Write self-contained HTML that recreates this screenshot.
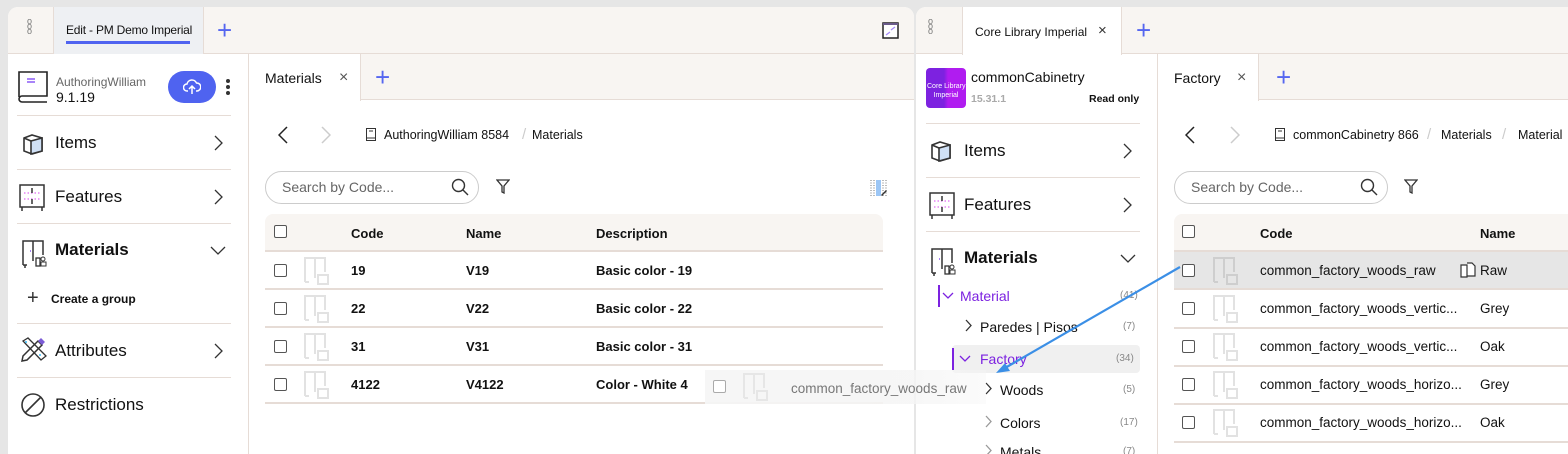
<!DOCTYPE html>
<html><head><meta charset="utf-8"><style>
*{box-sizing:border-box;margin:0;padding:0}
body{width:1568px;height:454px;overflow:hidden;background:#e6e6e6;font-family:"Liberation Sans",Arial,sans-serif;color:#111;position:relative}
.a{position:absolute}
.t{position:absolute;white-space:nowrap}
.cb{position:absolute;width:13px;height:13px;border:1px solid #555;border-radius:2px;background:#fff}
.hr{position:absolute;height:1px;background:#e6dcd6}
.th{position:absolute;width:27px;height:30px;opacity:.18}
</style></head><body>
<!-- LEFT PANEL -->
<div class="a" style="left:8px;top:7px;width:906px;height:447px;background:#fff;border-radius:10px 10px 0 0;overflow:hidden">
 <div class="a" style="left:0;top:0;width:906px;height:47px;background:#f8f5f2;border-bottom:1px solid #e6dcd6"></div>
 <div class="a" style="left:45px;top:0;width:151px;height:47px;background:#eef0f3;border-left:1px solid #e6dcd6;border-right:1px solid #e6dcd6"></div>
 <div class="t" style="left:58px;top:16px;font-size:12px;letter-spacing:-.2px">Edit - PM Demo Imperial</div>
 <div class="a" style="left:58px;top:34px;width:124px;height:3px;background:#4f63f0"></div>
 <div class="t" style="left:19px;top:12px;font-size:9px;line-height:5px;color:#777">o<br>o<br>o</div>
 <div class="t" style="left:209px;top:8px;font-size:26px;color:#5566f0;font-weight:300">+</div>
 <svg class="a" style="left:874px;top:15px" width="17" height="17"><rect x="1" y="1" width="15" height="15" fill="#fff" stroke="#222" stroke-width="1.5"/><rect x="1" y="1" width="15" height="2" fill="#6a5a8a"/><path d="M9 8l4-3M4 13l4-3" stroke="#a78bfa" stroke-width="1.3"/></svg>
 <!-- sidebar -->
 <div class="a" style="left:240px;top:47px;width:1px;height:400px;background:#e6dcd6"></div>
 <svg class="a" style="left:9px;top:63px" width="32" height="34"><path d="M2 27V2h28v24H5a3 3 0 0 0 0 6h25" fill="none" stroke="#222" stroke-width="1.6"/><path d="M10 9h8M10 12h8" stroke="#8b5cf6" stroke-width="1.5"/></svg>
 <div class="t" style="left:48px;top:68px;font-size:12px;color:#666">AuthoringWilliam</div>
 <div class="t" style="left:48px;top:82px;font-size:14px">9.1.19</div>
 <div class="a" style="left:160px;top:64px;width:48px;height:32px;border-radius:16px;background:#4f63f0"></div>
 <svg class="a" style="left:175px;top:71px" width="18" height="18"><path d="M5 13H4a3.5 3.5 0 0 1 0-7 5 5 0 0 1 9.5-1A3.5 3.5 0 0 1 14 13h-1M9 16V9M6 11l3-3 3 3" fill="none" stroke="#fff" stroke-width="1.5"/></svg>
 <div class="a" style="left:218px;top:72px;width:4px;height:4px;border-radius:2px;background:#333"></div>
 <div class="a" style="left:218px;top:78px;width:4px;height:4px;border-radius:2px;background:#333"></div>
 <div class="a" style="left:218px;top:84px;width:4px;height:4px;border-radius:2px;background:#333"></div>
 <div class="hr" style="left:9px;top:108px;width:214px"></div>
 <svg class="a" style="left:13px;top:125px" width="24" height="24"><path d="M3 6l8-3 10 3v13l-10 3-8-3z" fill="#fff" stroke="#333" stroke-width="1.6"/><path d="M10 9l11-3v13l-11 3z" fill="#cfe0f5" stroke="#333" stroke-width="1.6"/><path d="M3 6l7 3" stroke="#333" stroke-width="1.6"/></svg>
 <div class="t" style="left:47px;top:126px;font-size:17px">Items</div>
 <svg class="a" style="left:206px;top:128px" width="9" height="16"><path d="M1 1l7 7-7 7" fill="none" stroke="#333" stroke-width="1.3"/></svg>
 <div class="hr" style="left:9px;top:162px;width:214px"></div>
 <svg class="a" style="left:11px;top:177px" width="26" height="28"><rect x="1" y="1" width="24" height="22" fill="#fff" stroke="#333" stroke-width="1.5"/><path d="M5 9h16M5 15h16" stroke="#d946ef" stroke-dasharray="1.5 2"/><path d="M13 4v5M13 20v-5" stroke="#333" stroke-width="1.5"/><path d="M3 23v4M23 23v4" stroke="#333" stroke-width="1.5"/></svg>
 <div class="t" style="left:47px;top:180px;font-size:17px">Features</div>
 <svg class="a" style="left:206px;top:182px" width="9" height="16"><path d="M1 1l7 7-7 7" fill="none" stroke="#333" stroke-width="1.3"/></svg>
 <div class="hr" style="left:9px;top:216px;width:214px"></div>
 <svg class="a" style="left:13px;top:232px" width="26" height="30"><path d="M2 26V2h20v14M12 2v20M2 26h4M4 26v3" fill="none" stroke="#333" stroke-width="1.5"/><rect x="15" y="19" width="4" height="8" fill="none" stroke="#333" stroke-width="1.3"/><circle cx="22" cy="20" r="2" fill="none" stroke="#333"/><rect x="20" y="23" width="5" height="4" fill="none" stroke="#333"/><path d="M9 12h1" stroke="#8b5cf6" stroke-width="1.5"/></svg>
 <div class="t" style="left:47px;top:233px;font-size:17px;font-weight:bold">Materials</div>
 <svg class="a" style="left:202px;top:239px" width="16" height="9"><path d="M1 1l7 7 7-7" fill="none" stroke="#333" stroke-width="1.3"/></svg>
 <div class="t" style="left:19px;top:280px;font-size:20px;color:#333;font-weight:300">+</div>
 <div class="t" style="left:43px;top:285px;font-size:12px;font-weight:bold">Create a group</div>
 <div class="hr" style="left:9px;top:316px;width:214px"></div>
 <svg class="a" style="left:11px;top:330px" width="28" height="26"><path d="M3 24l5-1 15-15-4-4L4 19z" fill="#fff" stroke="#333" stroke-width="1.5"/><path d="M19 4l3-3 4 4-3 3" fill="#7c5cd6"/><path d="M4 4l5-3 18 18-5 4z" fill="none" stroke="#333" stroke-width="1.3"/><path d="M6 5h2M20 18h2" stroke="#38bdf8" stroke-width="1.5"/></svg>
 <div class="t" style="left:47px;top:334px;font-size:17px">Attributes</div>
 <svg class="a" style="left:206px;top:336px" width="9" height="16"><path d="M1 1l7 7-7 7" fill="none" stroke="#333" stroke-width="1.3"/></svg>
 <div class="hr" style="left:9px;top:370px;width:214px"></div>
 <svg class="a" style="left:12px;top:385px" width="26" height="26"><circle cx="13" cy="13" r="11" fill="none" stroke="#333" stroke-width="1.6"/><path d="M5 21L21 5" stroke="#333" stroke-width="1.6"/></svg>
 <div class="t" style="left:47px;top:388px;font-size:17px">Restrictions</div>
 <!-- content -->
 <div class="a" style="left:241px;top:47px;width:665px;height:46px;background:#f8f5f2;border-bottom:1px solid #e6dcd6"></div>
 <div class="a" style="left:241px;top:47px;width:112px;height:47px;background:#fff;border-right:1px solid #e6dcd6"></div>
 <div class="t" style="left:257px;top:63px;font-size:14px">Materials</div>
 <div class="t" style="left:331px;top:62px;font-size:16px;color:#555">×</div>
 <div class="t" style="left:367px;top:55px;font-size:26px;color:#5566f0;font-weight:300">+</div>
 <svg class="a" style="left:270px;top:119px" width="10" height="18"><path d="M9 1L1 9l8 8" fill="none" stroke="#222" stroke-width="1.5"/></svg>
 <svg class="a" style="left:313px;top:119px" width="10" height="18"><path d="M1 1l8 8-8 8" fill="none" stroke="#ccc" stroke-width="1.5"/></svg>
 <svg class="a" style="left:358px;top:121px" width="10" height="13"><rect x=".5" y=".5" width="9" height="12" fill="none" stroke="#333"/><path d="M3 3h4M.5 10h9" stroke="#333"/></svg>
 <div class="t" style="left:376px;top:121px;font-size:12.5px">AuthoringWilliam 8584</div>
 <div class="t" style="left:514px;top:119px;font-size:15px;color:#ccc">/</div>
 <div class="t" style="left:524px;top:121px;font-size:12.5px">Materials</div>
 <div class="a" style="left:257px;top:164px;width:214px;height:33px;border:1px solid #ccc;border-radius:17px"></div>
 <div class="t" style="left:274px;top:172px;font-size:14px;color:#666">Search by Code...</div>
 <svg class="a" style="left:443px;top:171px" width="18" height="18"><circle cx="7.5" cy="7.5" r="6" fill="none" stroke="#333" stroke-width="1.4"/><path d="M12 12l5 5" stroke="#333" stroke-width="1.4"/></svg>
 <svg class="a" style="left:488px;top:172px" width="14" height="15"><path d="M1 1h12L8 7v7l-2-1V7z" fill="none" stroke="#333" stroke-width="1.3"/></svg>
 <svg class="a" style="left:862px;top:172px" width="18" height="18"><path d="M1 1v16M4 1v16M13 1v16M16 1v16" stroke="#777" stroke-dasharray="1 1.5"/><rect x="6" y="1" width="5" height="16" fill="#9cc6f5"/><path d="M11 16l5-5 1 1-5 5z" fill="#333"/></svg>
 <div class="a" style="left:257px;top:207px;width:618px;height:38px;background:#f8f5f2;border-radius:8px 8px 0 0;border-bottom:2px solid #e6dcd6"></div>
 <div class="cb" style="left:266px;top:218px"></div>
 <div class="t" style="left:343px;top:219px;font-size:13px;font-weight:bold">Code</div>
 <div class="t" style="left:458px;top:219px;font-size:13px;font-weight:bold">Name</div>
 <div class="t" style="left:588px;top:219px;font-size:13px;font-weight:bold">Description</div>
</div>
<!-- left rows -->
<div class="a" style="left:265px;top:252px;width:618px;height:152px">
 <div class="hr" style="left:0;top:36px;width:618px;height:2px"></div>
 <div class="hr" style="left:0;top:74px;width:618px;height:2px"></div>
 <div class="hr" style="left:0;top:112px;width:618px;height:2px"></div>
 <div class="hr" style="left:0;top:150px;width:618px;height:2px"></div>
</div>
<div class="cb" style="left:274px;top:264px"></div><div class="cb" style="left:274px;top:302px"></div><div class="cb" style="left:274px;top:340px"></div><div class="cb" style="left:274px;top:378px"></div>
<svg class="th" style="left:303px;top:256px" viewBox="0 0 27 30"><path d="M2 26V2h20v14M12 2v20M2 26h4" fill="none" stroke="#666" stroke-width="2"/><rect x="15" y="19" width="10" height="9" fill="none" stroke="#666" stroke-width="2"/></svg>
<svg class="th" style="left:303px;top:294px" viewBox="0 0 27 30"><path d="M2 26V2h20v14M12 2v20M2 26h4" fill="none" stroke="#666" stroke-width="2"/><rect x="15" y="19" width="10" height="9" fill="none" stroke="#666" stroke-width="2"/></svg>
<svg class="th" style="left:303px;top:332px" viewBox="0 0 27 30"><path d="M2 26V2h20v14M12 2v20M2 26h4" fill="none" stroke="#666" stroke-width="2"/><rect x="15" y="19" width="10" height="9" fill="none" stroke="#666" stroke-width="2"/></svg>
<svg class="th" style="left:303px;top:370px" viewBox="0 0 27 30"><path d="M2 26V2h20v14M12 2v20M2 26h4" fill="none" stroke="#666" stroke-width="2"/><rect x="15" y="19" width="10" height="9" fill="none" stroke="#666" stroke-width="2"/></svg>
<div class="t" style="left:351px;top:263px;font-size:13px;font-weight:bold">19</div><div class="t" style="left:466px;top:263px;font-size:13px;font-weight:bold">V19</div><div class="t" style="left:596px;top:263px;font-size:13px;font-weight:bold">Basic color - 19</div>
<div class="t" style="left:351px;top:301px;font-size:13px;font-weight:bold">22</div><div class="t" style="left:466px;top:301px;font-size:13px;font-weight:bold">V22</div><div class="t" style="left:596px;top:301px;font-size:13px;font-weight:bold">Basic color - 22</div>
<div class="t" style="left:351px;top:339px;font-size:13px;font-weight:bold">31</div><div class="t" style="left:466px;top:339px;font-size:13px;font-weight:bold">V31</div><div class="t" style="left:596px;top:339px;font-size:13px;font-weight:bold">Basic color - 31</div>
<div class="t" style="left:351px;top:377px;font-size:13px;font-weight:bold">4122</div><div class="t" style="left:466px;top:377px;font-size:13px;font-weight:bold">V4122</div><div class="t" style="left:596px;top:377px;font-size:13px;font-weight:bold">Color - White 4</div>
<!-- drag ghost (under right panel tree text) -->
<div class="a" style="left:705px;top:370px;width:460px;height:34px;background:linear-gradient(90deg,rgba(245,245,245,.95),rgba(245,245,245,.8) 60%,rgba(255,255,255,0));"></div>
<!-- RIGHT PANEL -->
<div class="a" style="left:916px;top:7px;width:652px;height:447px;background:#fff;border-radius:10px 0 0 0;overflow:hidden">
 <div class="a" style="left:0;top:0;width:652px;height:47px;background:#f8f5f2;border-bottom:1px solid #e6dcd6"></div>
 <div class="a" style="left:46px;top:0;width:160px;height:48px;background:#fff;border-left:1px solid #e6dcd6;border-right:1px solid #e6dcd6"></div>
 <div class="t" style="left:59px;top:18px;font-size:12px">Core Library Imperial</div>
 <div class="t" style="left:182px;top:15px;font-size:15px;color:#333">×</div>
 <div class="t" style="left:12px;top:12px;font-size:9px;line-height:5px;color:#777">o<br>o<br>o</div>
 <div class="t" style="left:220px;top:8px;font-size:26px;color:#5566f0;font-weight:300">+</div>
 <div class="a" style="left:241px;top:47px;width:1px;height:400px;background:#e6dcd6"></div>
 <div class="a" style="left:10px;top:61px;width:40px;height:40px;border-radius:4px;background:linear-gradient(90deg,#7d22e0 45%,#b01cf0 55%)"></div>
 <div class="t" style="left:11px;top:75px;font-size:7px;color:#fff;width:38px;text-align:center;line-height:9px">Core Library<br>Imperial</div>
 <div class="t" style="left:55px;top:62px;font-size:14px">commonCabinetry</div>
 <div class="t" style="left:55px;top:86px;font-size:10.5px;color:#aaa;font-weight:bold">15.31.1</div>
 <div class="t" style="left:173px;top:86px;font-size:10.5px;font-weight:bold">Read only</div>
 <div class="hr" style="left:10px;top:116px;width:214px"></div>
 <svg class="a" style="left:13px;top:132px" width="24" height="24"><path d="M3 6l8-3 10 3v13l-10 3-8-3z" fill="#fff" stroke="#333" stroke-width="1.6"/><path d="M10 9l11-3v13l-11 3z" fill="#cfe0f5" stroke="#333" stroke-width="1.6"/><path d="M3 6l7 3" stroke="#333" stroke-width="1.6"/></svg>
 <div class="t" style="left:48px;top:134px;font-size:17px">Items</div>
 <svg class="a" style="left:207px;top:136px" width="9" height="16"><path d="M1 1l7 7-7 7" fill="none" stroke="#333" stroke-width="1.3"/></svg>
 <div class="hr" style="left:10px;top:170px;width:214px"></div>
 <svg class="a" style="left:13px;top:185px" width="26" height="28"><rect x="1" y="1" width="24" height="22" fill="#fff" stroke="#333" stroke-width="1.5"/><path d="M5 9h16M5 15h16" stroke="#d946ef" stroke-dasharray="1.5 2"/><path d="M13 4v5M13 20v-5" stroke="#333" stroke-width="1.5"/><path d="M3 23v4M23 23v4" stroke="#333" stroke-width="1.5"/></svg>
 <div class="t" style="left:48px;top:188px;font-size:17px">Features</div>
 <svg class="a" style="left:207px;top:190px" width="9" height="16"><path d="M1 1l7 7-7 7" fill="none" stroke="#333" stroke-width="1.3"/></svg>
 <div class="hr" style="left:10px;top:224px;width:214px"></div>
 <svg class="a" style="left:14px;top:240px" width="26" height="30"><path d="M2 26V2h20v14M12 2v20M2 26h4M4 26v3" fill="none" stroke="#333" stroke-width="1.5"/><rect x="15" y="19" width="4" height="8" fill="none" stroke="#333" stroke-width="1.3"/><circle cx="22" cy="20" r="2" fill="none" stroke="#333"/><rect x="20" y="23" width="5" height="4" fill="none" stroke="#333"/><path d="M9 12h1" stroke="#8b5cf6" stroke-width="1.5"/></svg>
 <div class="t" style="left:48px;top:241px;font-size:17px;font-weight:bold">Materials</div>
 <svg class="a" style="left:204px;top:247px" width="16" height="9"><path d="M1 1l7 7 7-7" fill="none" stroke="#333" stroke-width="1.3"/></svg>
 <div class="a" style="left:22px;top:278px;width:2px;height:22px;background:#7c22e0"></div>
 <svg class="a" style="left:26px;top:285px" width="12" height="7"><path d="M1 1l5 5 5-5" fill="none" stroke="#7c22e0" stroke-width="1.3"/></svg>
 <div class="t" style="left:44px;top:281px;font-size:14px;color:#7c22e0">Material</div>
 <div class="t" style="left:204px;top:283px;font-size:10px;color:#888">(41)</div>
 <svg class="a" style="left:49px;top:312px" width="7" height="13"><path d="M1 1l5 5.5L1 12" fill="none" stroke="#333" stroke-width="1.3"/></svg>
 <div class="t" style="left:64px;top:312px;font-size:14px">Paredes | Pisos</div>
 <div class="t" style="left:207px;top:314px;font-size:10px;color:#888">(7)</div>
 <div class="a" style="left:36px;top:338px;width:188px;height:28px;background:#f0f0f0;border-radius:4px"></div>
 <div class="a" style="left:36px;top:341px;width:2px;height:22px;background:#7c22e0"></div>
 <svg class="a" style="left:43px;top:348px" width="12" height="7"><path d="M1 1l5 5 5-5" fill="none" stroke="#7c22e0" stroke-width="1.3"/></svg>
 <div class="t" style="left:64px;top:344px;font-size:14px;color:#7c22e0">Factory</div>
 <div class="t" style="left:200px;top:346px;font-size:10px;color:#888">(34)</div>
 <svg class="a" style="left:69px;top:375px" width="7" height="13"><path d="M1 1l5 5.5L1 12" fill="none" stroke="#333" stroke-width="1.3"/></svg>
 <div class="t" style="left:84px;top:375px;font-size:14px">Woods</div>
 <div class="t" style="left:207px;top:377px;font-size:10px;color:#888">(5)</div>
 <svg class="a" style="left:69px;top:408px" width="7" height="13"><path d="M1 1l5 5.5L1 12" fill="none" stroke="#999" stroke-width="1.3"/></svg>
 <div class="t" style="left:84px;top:408px;font-size:14px">Colors</div>
 <div class="t" style="left:204px;top:410px;font-size:10px;color:#888">(17)</div>
 <svg class="a" style="left:69px;top:437px" width="7" height="13"><path d="M1 1l5 5.5L1 12" fill="none" stroke="#999" stroke-width="1.3"/></svg>
 <div class="t" style="left:84px;top:437px;font-size:14px">Metals</div>
 <div class="t" style="left:207px;top:439px;font-size:10px;color:#888">(7)</div>
 <!-- content -->
 <div class="a" style="left:242px;top:47px;width:410px;height:46px;background:#f8f5f2;border-bottom:1px solid #e6dcd6"></div>
 <div class="a" style="left:242px;top:47px;width:101px;height:47px;background:#fff;border-right:1px solid #e6dcd6"></div>
 <div class="t" style="left:258px;top:63px;font-size:14px">Factory</div>
 <div class="t" style="left:321px;top:62px;font-size:16px;color:#555">×</div>
 <div class="t" style="left:360px;top:55px;font-size:26px;color:#5566f0;font-weight:300">+</div>
 <svg class="a" style="left:269px;top:119px" width="10" height="18"><path d="M9 1L1 9l8 8" fill="none" stroke="#222" stroke-width="1.5"/></svg>
 <svg class="a" style="left:314px;top:119px" width="10" height="18"><path d="M1 1l8 8-8 8" fill="none" stroke="#ccc" stroke-width="1.5"/></svg>
 <svg class="a" style="left:359px;top:121px" width="10" height="13"><rect x=".5" y=".5" width="9" height="12" fill="none" stroke="#333"/><path d="M3 3h4M.5 10h9" stroke="#333"/></svg>
 <div class="t" style="left:377px;top:121px;font-size:12.5px">commonCabinetry 866</div>
 <div class="t" style="left:511px;top:119px;font-size:15px;color:#ccc">/</div>
 <div class="t" style="left:525px;top:121px;font-size:12.5px">Materials</div>
 <div class="t" style="left:586px;top:119px;font-size:15px;color:#ccc">/</div>
 <div class="t" style="left:602px;top:121px;font-size:12.5px">Material</div>
 <div class="a" style="left:258px;top:164px;width:214px;height:33px;border:1px solid #ccc;border-radius:17px"></div>
 <div class="t" style="left:275px;top:172px;font-size:14px;color:#666">Search by Code...</div>
 <svg class="a" style="left:444px;top:171px" width="18" height="18"><circle cx="7.5" cy="7.5" r="6" fill="none" stroke="#333" stroke-width="1.4"/><path d="M12 12l5 5" stroke="#333" stroke-width="1.4"/></svg>
 <svg class="a" style="left:488px;top:172px" width="14" height="15"><path d="M1 1h12L8 7v7l-2-1V7z" fill="none" stroke="#333" stroke-width="1.3"/></svg>
 <div class="a" style="left:258px;top:207px;width:400px;height:38px;background:#f8f5f2;border-radius:8px 0 0 0;border-bottom:2px solid #e6dcd6"></div>
 <div class="cb" style="left:266px;top:218px"></div>
 <div class="t" style="left:344px;top:219px;font-size:13px;font-weight:bold">Code</div>
 <div class="t" style="left:564px;top:219px;font-size:13px;font-weight:bold">Name</div>
</div>
<!-- ghost over panel, light -->
<div class="a" style="left:916px;top:370px;width:70px;height:34px;background:linear-gradient(90deg,rgba(245,245,245,.8),rgba(245,245,245,.4))"></div>
<div class="cb" style="left:713px;top:380px;border-color:#aaa"></div>
<svg class="th" style="left:742px;top:372px;opacity:.1" viewBox="0 0 27 30"><path d="M2 26V2h20v14M12 2v20M2 26h4" fill="none" stroke="#666" stroke-width="2"/><rect x="15" y="19" width="10" height="9" fill="none" stroke="#666" stroke-width="2"/></svg>
<div class="t" style="left:791px;top:381px;font-size:13.5px;color:#777">common_factory_woods_raw</div>
<!-- right rows -->
<div class="a" style="left:1174px;top:252px;width:394px;height:38px;background:#e6e6e6;border-bottom:2px solid #e6dcd6"></div>
<div class="hr" style="left:1174px;top:327px;width:394px;height:2px"></div>
<div class="hr" style="left:1174px;top:365px;width:394px;height:2px"></div>
<div class="hr" style="left:1174px;top:403px;width:394px;height:2px"></div>
<div class="hr" style="left:1174px;top:441px;width:394px;height:2px"></div>
<div class="cb" style="left:1182px;top:264px"></div><div class="cb" style="left:1182px;top:302px"></div><div class="cb" style="left:1182px;top:340px"></div><div class="cb" style="left:1182px;top:378px"></div><div class="cb" style="left:1182px;top:416px"></div>
<svg class="th" style="left:1212px;top:256px" viewBox="0 0 27 30"><path d="M2 26V2h20v14M12 2v20M2 26h4" fill="none" stroke="#666" stroke-width="2"/><rect x="15" y="19" width="10" height="9" fill="none" stroke="#666" stroke-width="2"/></svg>
<svg class="th" style="left:1212px;top:294px" viewBox="0 0 27 30"><path d="M2 26V2h20v14M12 2v20M2 26h4" fill="none" stroke="#666" stroke-width="2"/><rect x="15" y="19" width="10" height="9" fill="none" stroke="#666" stroke-width="2"/></svg>
<svg class="th" style="left:1212px;top:332px" viewBox="0 0 27 30"><path d="M2 26V2h20v14M12 2v20M2 26h4" fill="none" stroke="#666" stroke-width="2"/><rect x="15" y="19" width="10" height="9" fill="none" stroke="#666" stroke-width="2"/></svg>
<svg class="th" style="left:1212px;top:370px" viewBox="0 0 27 30"><path d="M2 26V2h20v14M12 2v20M2 26h4" fill="none" stroke="#666" stroke-width="2"/><rect x="15" y="19" width="10" height="9" fill="none" stroke="#666" stroke-width="2"/></svg>
<svg class="th" style="left:1212px;top:408px" viewBox="0 0 27 30"><path d="M2 26V2h20v14M12 2v20M2 26h4" fill="none" stroke="#666" stroke-width="2"/><rect x="15" y="19" width="10" height="9" fill="none" stroke="#666" stroke-width="2"/></svg>
<div class="t" style="left:1260px;top:263px;font-size:13.5px">common_factory_woods_raw</div>
<svg class="a" style="left:1460px;top:262px" width="16" height="16"><path d="M1 3h6v12H1zM7 1h5l3 3v10H7" fill="#fff" stroke="#333" stroke-width="1.2"/></svg>
<div class="t" style="left:1480px;top:263px;font-size:13.5px">Raw</div>
<div class="t" style="left:1260px;top:301px;font-size:13.5px">common_factory_woods_vertic...</div><div class="t" style="left:1480px;top:301px;font-size:13.5px">Grey</div>
<div class="t" style="left:1260px;top:339px;font-size:13.5px">common_factory_woods_vertic...</div><div class="t" style="left:1480px;top:339px;font-size:13.5px">Oak</div>
<div class="t" style="left:1260px;top:377px;font-size:13.5px">common_factory_woods_horizo...</div><div class="t" style="left:1480px;top:377px;font-size:13.5px">Grey</div>
<div class="t" style="left:1260px;top:415px;font-size:13.5px">common_factory_woods_horizo...</div><div class="t" style="left:1480px;top:415px;font-size:13.5px">Oak</div>
<!-- arrow -->
<svg class="a" style="left:0;top:0" width="1568" height="454"><path d="M1180 267L1005 368" stroke="#3b8fe6" stroke-width="2.2"/><path d="M996 373l14-2-5-8z" fill="#3b8fe6"/></svg>
</body></html>
